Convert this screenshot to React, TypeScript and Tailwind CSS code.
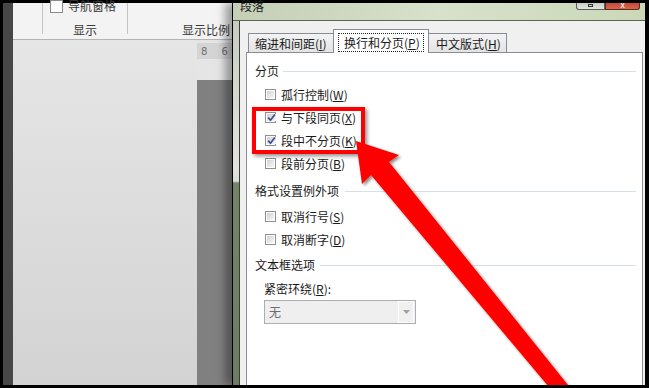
import React from 'react';

const cjk = "font-['Noto_Sans_CJK_SC','Noto_Sans',sans-serif]";

function Box({ checked }: { checked?: boolean }) {
  return (
    <span className="w-[11px] h-[11px] border border-[#8e8f8f] bg-white p-px shrink-0 flex">
      <span className="flex-1 bg-gradient-to-br from-[#cfd2d6] to-[#f7f7f7] flex items-center justify-center">
        {checked && (
          <svg width="9" height="9" viewBox="0 0 9 9">
            <path d="M1.2 4.6 L3.5 7.2 L7.8 1.4" fill="none" stroke="#3c4e8c" strokeWidth="1.7" />
          </svg>
        )}
      </span>
    </span>
  );
}

function Option({ label, keyChar, checked }: { label: string; keyChar: string; checked?: boolean }) {
  return (
    <div className="h-[23px] flex items-center pl-[18px] gap-[5px]">
      <Box checked={checked} />
      <span className="text-[12px] leading-none text-[#1a1a1a]">
        {label}(<u>{keyChar}</u>)
      </span>
    </div>
  );
}

function Section({ title, gap }: { title: string; gap: string }) {
  return (
    <div className="h-[24px] flex items-center pl-[8px] pr-[6px]">
      <span className="text-[12px] leading-none text-[#1a1a1a]">{title}</span>
      <div className={`flex-1 h-px bg-[#d5dfe5] ${gap}`} />
    </div>
  );
}

export default function App() {
  return (
    <div className={`relative w-[649px] h-[388px] bg-black pt-[3px] pl-[3px] overflow-hidden ${cjk}`}>
      <div className="flex w-[642px] h-[382px]">
        {/* Word window behind */}
        <div className="w-[229px] flex shrink-0">
          <div className="w-[10px] bg-[#474747]" />
          <div className="w-[219px] flex flex-col">
            <div className="h-[37px] bg-[#f3f3f3] border-b border-[#b4b4b4] flex text-[12px] leading-none text-[#3a3a3a]">
              <div className="w-[29px]" />
              <div className="w-px h-[31px] bg-[#c4c4c4]" />
              <div className="w-[84px] flex flex-col">
                <div className="h-[20px] -mt-[7px] flex items-center pl-[7px] gap-[5px]">
                  <span className="w-[13px] h-[13px] border border-[#8a8a8a] bg-white" />
                  <span>导航窗格</span>
                </div>
                <div className="mt-[8px] text-center">显示</div>
              </div>
              <div className="w-px h-[31px] bg-[#c4c4c4]" />
              <div className="flex-1 flex flex-col">
                <div className="mt-[21px] pl-[54px] whitespace-nowrap overflow-hidden">显示比例</div>
              </div>
            </div>
            <div className="flex-1 flex">
              <div className="w-[184px] bg-gradient-to-b from-[#e6e6e6] to-[#d3d3d3]" />
              <div className="w-[35px] flex flex-col bg-[#e5e5e5]">
                <div className="h-[40px] pt-[3px]">
                  <div className="h-[16px] bg-[#d4d4d4] flex items-center gap-[14px] pl-[4px] text-[10px] text-[#707070] font-['DejaVu_Sans',sans-serif]">
                    <span>8</span>
                    <span>6</span>
                  </div>
                </div>
                <div className="flex-1 bg-[#808080]" />
              </div>
            </div>
          </div>
        </div>

        {/* Paragraph dialog */}
        <div className="w-[413px] shrink-0 flex flex-col border-l border-black shadow-[-7px_0_8px_rgba(0,0,0,0.35)] z-10">
          <div className="h-[18px] border-b border-[#5a6852] bg-gradient-to-r from-[#c4cfb6] via-[#d8e1cb] to-[#cad8b8] flex items-start">
            <span className="pl-[7px] -mt-[4px] text-[12px] leading-[14px] text-[#1c1c1c]">段落</span>
            <div className="ml-auto flex">
              <div className="w-[29px] h-[7px] border border-t-0 border-[#5b5b5b] rounded-bl-[3px] bg-gradient-to-b from-[#c9cec4] to-[#e3e6df] flex justify-center">
                <span className="w-[5px] h-[3px] border border-[#333] mt-[1px]" />
              </div>
              <div className="w-[35px] h-[7px] border border-t-0 border-[#5b2a22] rounded-br-[3px] bg-gradient-to-b from-[#c44a3c] to-[#d9654c] flex justify-center">
                <span className="text-[8px] leading-[6px] text-white font-['DejaVu_Sans',sans-serif]">x</span>
              </div>
              <div className="w-[5px]" />
            </div>
          </div>
          <div className="flex-1 flex">
            <div className="w-[6px] bg-[linear-gradient(to_bottom,#c6cdbd_0%,#e2e4db_40%,#dcdfd4_44%,#748465_44.5%,#6e7d5f_100%)]" />
            <div className="w-px bg-[#3a3a3a]" />
            <div className="flex-1 bg-[#f0f0f0] pt-[8px] pl-[6px] pr-[2px] flex flex-col">
              <div className="h-[24px] -mb-px pl-[2px] flex items-end text-[12px] leading-none text-[#1a1a1a]">
                <div className="w-[86px] h-[20px] border border-b-0 border-[#898c95] bg-gradient-to-b from-[#f3f3f3] to-[#e3e3e3] flex items-center pl-[6px]">
                  缩进和间距(<u>I</u>)
                </div>
                <div className="w-[96px] h-[24px] -ml-px border border-b-0 border-[#898c95] bg-white z-10 flex items-center justify-center">
                  <span className="w-[86px] h-[19px] mt-[2px] border border-dotted border-[#222] flex items-center pl-[5px]">
                    换行和分页(<u>P</u>)
                  </span>
                </div>
                <div className="w-[79px] h-[20px] -ml-px border border-b-0 border-[#898c95] bg-gradient-to-b from-[#f3f3f3] to-[#e3e3e3] flex items-center pl-[7px]">
                  中文版式(<u>H</u>)
                </div>
              </div>
              <div className="flex-1 bg-white border border-b-0 border-[#898c95] flex flex-col pt-[6px]">
                <Section title="分页" gap="ml-[4px]" />
                <Option label="孤行控制" keyChar="W" />
                <Option label="与下段同页" keyChar="X" checked />
                <Option label="段中不分页" keyChar="K" checked />
                <Option label="段前分页" keyChar="B" />
                <div className="h-[4px]" />
                <Section title="格式设置例外项" gap="ml-[6px]" />
                <div className="h-[2px]" />
                <Option label="取消行号" keyChar="S" />
                <Option label="取消断字" keyChar="D" />
                <div className="h-[2px]" />
                <Section title="文本框选项" gap="ml-[5px]" />
                <div className="h-[24px] flex items-center pl-[17px] text-[12px] leading-none text-[#1a1a1a]">
                  紧密环绕(<u>R</u>):
                </div>
                <div className="ml-[17px] -mt-px w-[152px] h-[24px] border border-[#acaeb3] bg-[#efefef] flex items-center">
                  <span className="pl-[4px] flex-1 text-[12px] leading-none text-[#6d6d6d]">无</span>
                  <div className="w-[16px] h-[22px] mr-px border border-white bg-[#f0f0f0] flex items-center justify-center">
                    <svg width="7" height="4" viewBox="0 0 7 4">
                      <path d="M0 0 H7 L3.5 4 Z" fill="#a0a0a0" />
                    </svg>
                  </div>
                </div>
              </div>
            </div>
          </div>
        </div>
      </div>

      {/* annotation overlay */}
      <div className="absolute z-20 left-[3px] top-[3px] w-[642px] h-[382px] overflow-hidden pointer-events-none">
        <div className="absolute left-[249px] top-[104px] w-[113px] h-[47px] border-[4px] border-[#ff0000] shadow-[2px_2px_4px_rgba(0,0,0,0.45)]" />
        <svg className="absolute left-0 top-0" width="642" height="382" viewBox="3 3 642 382">
          <defs>
            <filter id="sh" x="-10%" y="-10%" width="130%" height="130%">
              <feDropShadow dx="2" dy="2" stdDeviation="1.5" floodColor="#000" floodOpacity="0.45" />
            </filter>
          </defs>
          <polygon
            points="356,141 399,155 389,162 576,395 564,405 371,175 362,184"
            fill="#ff0000"
            filter="url(#sh)"
          />
        </svg>
      </div>
    </div>
  );
}
